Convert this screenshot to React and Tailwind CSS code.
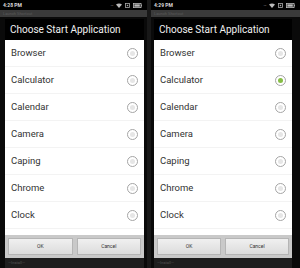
import React from "react";

const apps = ["Browser", "Calculator", "Calendar", "Camera", "Caping", "Chrome", "Clock", ""];

function StatusBar({ time }) {
  return (
    <div className="h-[10px] bg-black flex items-center justify-between px-[3px]">
      <span className="text-[5px] leading-none font-bold text-[#ddd]">{time}</span>
      <div className="flex items-center gap-[3px] pr-[2px]">
        <span className="text-[5px] leading-none text-[#bbb] tracking-[-0.5px]">···</span>
        <svg width="6" height="5" viewBox="0 0 6 5">
          <path d="M0 1.5 Q3 -0.5 6 1.5 L3 5 Z" fill="#bbb" />
        </svg>
        <svg width="5" height="5" viewBox="0 0 5 5">
          <rect x="0.5" y="0.5" width="4" height="4" fill="none" stroke="#aaa" strokeWidth="0.8" />
          <rect x="1.8" y="1.8" width="1.4" height="1.4" fill="#aaa" />
        </svg>
        <svg width="9" height="5" viewBox="0 0 9 5">
          <rect x="0.4" y="0.4" width="7.6" height="4.2" fill="none" stroke="#bbb" strokeWidth="0.8" />
          <rect x="1.3" y="1.3" width="5.5" height="2.4" fill="#bbb" />
          <rect x="8.2" y="1.6" width="0.8" height="1.8" fill="#bbb" />
        </svg>
      </div>
    </div>
  );
}

function Radio({ checked }) {
  return (
    <div className="w-[11px] h-[11px] rounded-full border border-[#a5a5a5] flex items-center justify-center">
      <div className={checked ? "w-[5px] h-[5px] rounded-full bg-[#86bd45]" : "w-[5px] h-[5px] rounded-full bg-[#e6e6e6]"} />
    </div>
  );
}

function Phone({ time, selected, inset }) {
  return (
    <div className="h-full flex flex-col bg-black">
      <StatusBar time={time} />
      <div className="h-[7px] bg-[#3a3a3a] flex items-center px-[3px]">
        <span className="text-[4px] leading-none text-[#5a5a5a]">Launch Shortcut</span>
      </div>
      <div className={"flex-1 flex flex-col bg-[#0a0a0a] pt-[2px] " + inset}>
        <div className="h-[21px] bg-black flex items-center pl-[5px]">
          <span className="text-[10px] leading-none text-[#f0f0f0]">Choose Start Application</span>
        </div>
        <div className="h-[195px] bg-white overflow-hidden flex flex-col">
          {apps.map((app, i) => (
            <div
              key={i}
              className="h-[27px] shrink-0 flex items-center justify-between pl-[6px] pr-[6px] border-b border-[#f3f3f3]"
            >
              <span className="text-[9.5px] leading-none text-[#333]">{app}</span>
              <Radio checked={i === selected} />
            </div>
          ))}
        </div>
        <div className="h-[23px] bg-[#c9c9c9] flex items-center gap-[4px] px-[3px]">
          <button className="flex-1 h-[17px] p-0 leading-none bg-gradient-to-b from-[#f0f0f0] to-[#dcdcdc] border border-[#b5b5b5] text-[5px] text-[#333]">
            OK
          </button>
          <button className="flex-1 h-[17px] p-0 leading-none bg-gradient-to-b from-[#f0f0f0] to-[#dcdcdc] border border-[#b5b5b5] text-[5px] text-[#333]">
            Cancel
          </button>
        </div>
        <div className="flex-1 bg-[#1e1e1e] flex items-center pl-[3px]">
          <span className="text-[4px] leading-none text-[#555]">—Install—</span>
        </div>
      </div>
    </div>
  );
}

export default function App() {
  return (
    <div
      className="w-[300px] h-[268px] bg-black flex overflow-hidden"
      style={{ fontFamily: "Roboto, 'Noto Sans', sans-serif" }}
    >
      <div className="w-[147px] h-full">
        <Phone time="4:28 PM" selected={-1} inset="pl-[5px] pr-[3px]" />
      </div>
      <div className="w-[4px] h-full bg-[#181818]" />
      <div className="w-[149px] h-full">
        <Phone time="4:29 PM" selected={1} inset="pl-[3px] pr-[8px]" />
      </div>
    </div>
  );
}
